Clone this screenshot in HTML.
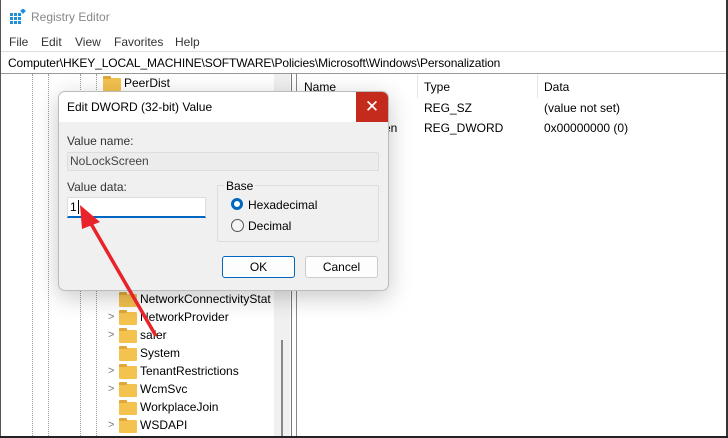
<!DOCTYPE html><html><head><style>
body{margin:0;width:728px;height:438px;overflow:hidden;background:#fff;font-family:"Liberation Sans",sans-serif;font-size:12px;color:#000;position:relative}
.a{position:absolute;white-space:nowrap}
.dot{position:absolute;top:74px;height:362px;border-left:1px dotted #999}
.fold{position:absolute;width:18px;height:13px;background:#f3c24f;border-radius:1px}
.fold:before{content:"";position:absolute;left:0;top:-2px;width:8px;height:3px;background:#e0a83a;border-radius:1px 1px 0 0}
.chev{position:absolute;color:#777;font-size:11px}
.btn{position:absolute;height:20px;border:1px solid #ccc;border-radius:3px;background:#fdfdfd;text-align:center;line-height:20px}
</style></head><body>
<svg class="a" style="left:10px;top:9px" width="16" height="16"><g fill="#1f8fd8"><rect x="0" y="4" width="3" height="3"/><rect x="4" y="4" width="3" height="3"/><rect x="8" y="4" width="3" height="3"/><rect x="0" y="8" width="3" height="3"/><rect x="4" y="8" width="3" height="3"/><rect x="8" y="8" width="3" height="3"/><rect x="0" y="12" width="3" height="3"/><rect x="4" y="12" width="3" height="3"/><rect x="8" y="12" width="3" height="3"/><rect x="11" y="0" width="4" height="4" transform="rotate(45 13 2)"/></g></svg>
<div class="a" style="left:31px;top:10px;color:#888;font-size:12px">Registry Editor</div>
<div class="a" style="left:0;top:0;width:1px;height:438px;background:#555"></div>
<div class="a" style="left:726px;top:0;width:2px;height:438px;background:#333"></div>
<div class="a" style="left:9px;top:35px;color:#333">File</div>
<div class="a" style="left:41px;top:35px;color:#333">Edit</div>
<div class="a" style="left:75px;top:35px;color:#333">View</div>
<div class="a" style="left:114px;top:35px;color:#333">Favorites</div>
<div class="a" style="left:175px;top:35px;color:#333">Help</div>
<div class="a" style="left:1px;top:51px;width:725px;height:21px;border-top:1px solid #ddd;border-bottom:1px solid #999"></div>
<div class="a" style="left:8px;top:56px;letter-spacing:-0.12px">Computer\HKEY_LOCAL_MACHINE\SOFTWARE\Policies\Microsoft\Windows\Personalization</div>
<div class="dot" style="left:32px"></div><div class="dot" style="left:48px"></div><div class="dot" style="left:80px"></div><div class="dot" style="left:96px"></div>
<div class="a" style="left:274px;top:74px;width:16px;height:362px;background:#f0f0f0"></div>
<div class="a" style="left:281px;top:340px;width:2px;height:96px;background:#888"></div>
<div class="a" style="left:291px;top:74px;width:1px;height:362px;background:#777"></div>
<div class="a" style="left:296px;top:74px;width:1px;height:362px;background:#888"></div>
<div class="fold" style="left:103px;top:78px"></div><div class="a" style="left:124px;top:76px">PeerDist</div>
<div class="a" style="left:110px;top:436px;width:160px;height:2px;background:#ccc"></div>
<div class="a" style="left:0;top:436px;width:728px;height:2px;background:#222"></div>
<div class="fold" style="left:119px;top:294px"></div><div class="a" style="left:140px;top:292px">NetworkConnectivityStat</div>
<div class="chev" style="left:108px;top:311px">&gt;</div><div class="fold" style="left:119px;top:312px"></div><div class="a" style="left:140px;top:310px">NetworkProvider</div>
<div class="chev" style="left:108px;top:329px">&gt;</div><div class="fold" style="left:119px;top:330px"></div><div class="a" style="left:140px;top:328px">safer</div>
<div class="fold" style="left:119px;top:348px"></div><div class="a" style="left:140px;top:346px">System</div>
<div class="chev" style="left:108px;top:365px">&gt;</div><div class="fold" style="left:119px;top:366px"></div><div class="a" style="left:140px;top:364px">TenantRestrictions</div>
<div class="chev" style="left:108px;top:383px">&gt;</div><div class="fold" style="left:119px;top:384px"></div><div class="a" style="left:140px;top:382px">WcmSvc</div>
<div class="fold" style="left:119px;top:402px"></div><div class="a" style="left:140px;top:400px">WorkplaceJoin</div>
<div class="chev" style="left:108px;top:419px">&gt;</div><div class="fold" style="left:119px;top:420px"></div><div class="a" style="left:140px;top:418px">WSDAPI</div>
<div class="a" style="left:304px;top:80px">Name</div>
<div class="a" style="left:417px;top:74px;width:1px;height:24px;background:#e5e5e5"></div>
<div class="a" style="left:424px;top:80px">Type</div>
<div class="a" style="left:537px;top:74px;width:1px;height:24px;background:#e5e5e5"></div>
<div class="a" style="left:544px;top:80px">Data</div>
<div class="a" style="left:424px;top:101px">REG_SZ</div><div class="a" style="left:544px;top:101px">(value not set)</div>
<div class="a" style="left:384px;top:121px">en</div>
<div class="a" style="left:424px;top:121px">REG_DWORD</div><div class="a" style="left:544px;top:121px">0x00000000 (0)</div>
<div class="a" style="left:58px;top:91px;width:329px;height:198px;background:#f0f0f0;border:1px solid #bbb;border-radius:7px;box-shadow:0 6px 24px rgba(0,0,0,.22);overflow:hidden">
 <div style="position:absolute;left:0;top:0;width:100%;height:30px;background:#fff"></div>
 <div style="position:absolute;right:0;top:0;width:32px;height:30px;background:#c42b1c;color:#fff;text-align:center;line-height:30px;font-size:17px">✕</div>
 <div class="a" style="left:8px;top:8px">Edit DWORD (32-bit) Value</div>
 <div class="a" style="left:8px;top:42px;color:#333">Value name:</div>
 <div class="a" style="left:8px;top:60px;width:310px;height:17px;border:1px solid #ddd;background:#ececec;border-radius:2px"></div>
 <div class="a" style="left:11px;top:62px;color:#444">NoLockScreen</div>
 <div class="a" style="left:8px;top:88px;color:#333">Value data:</div>
 <div class="a" style="left:8px;top:105px;width:137px;height:18px;background:#fff;border:1px solid #ddd;border-bottom:2px solid #0067c0"></div>
 <div class="a" style="left:11px;top:108px">1<span style="border-left:1px solid #000;margin-left:1px"></span></div>
 <div class="a" style="left:158px;top:93px;width:160px;height:55px;border:1px solid #ddd;border-radius:2px"></div>
 <div class="a" style="left:165px;top:87px;background:#f0f0f0;padding:0 2px">Base</div>
 <div class="a" style="left:172px;top:106px;width:6px;height:6px;border:3px solid #0067c0;border-radius:50%;background:#fff"></div>
 <div class="a" style="left:189px;top:106px">Hexadecimal</div>
 <div class="a" style="left:172px;top:127px;width:11px;height:11px;border:1px solid #555;border-radius:50%;background:#f5f5f5"></div>
 <div class="a" style="left:189px;top:127px">Decimal</div>
 <div class="btn" style="left:163px;top:164px;width:71px;border-color:#0067c0">OK</div>
 <div class="btn" style="left:246px;top:164px;width:71px">Cancel</div>
</div>
<svg class="a" style="left:0;top:0" width="728" height="438"><line x1="156" y1="336" x2="90" y2="222" stroke="#e8232a" stroke-width="3.5"/><polygon points="80,205 100,222 82,229" fill="#e8232a"/></svg>
</body></html>
